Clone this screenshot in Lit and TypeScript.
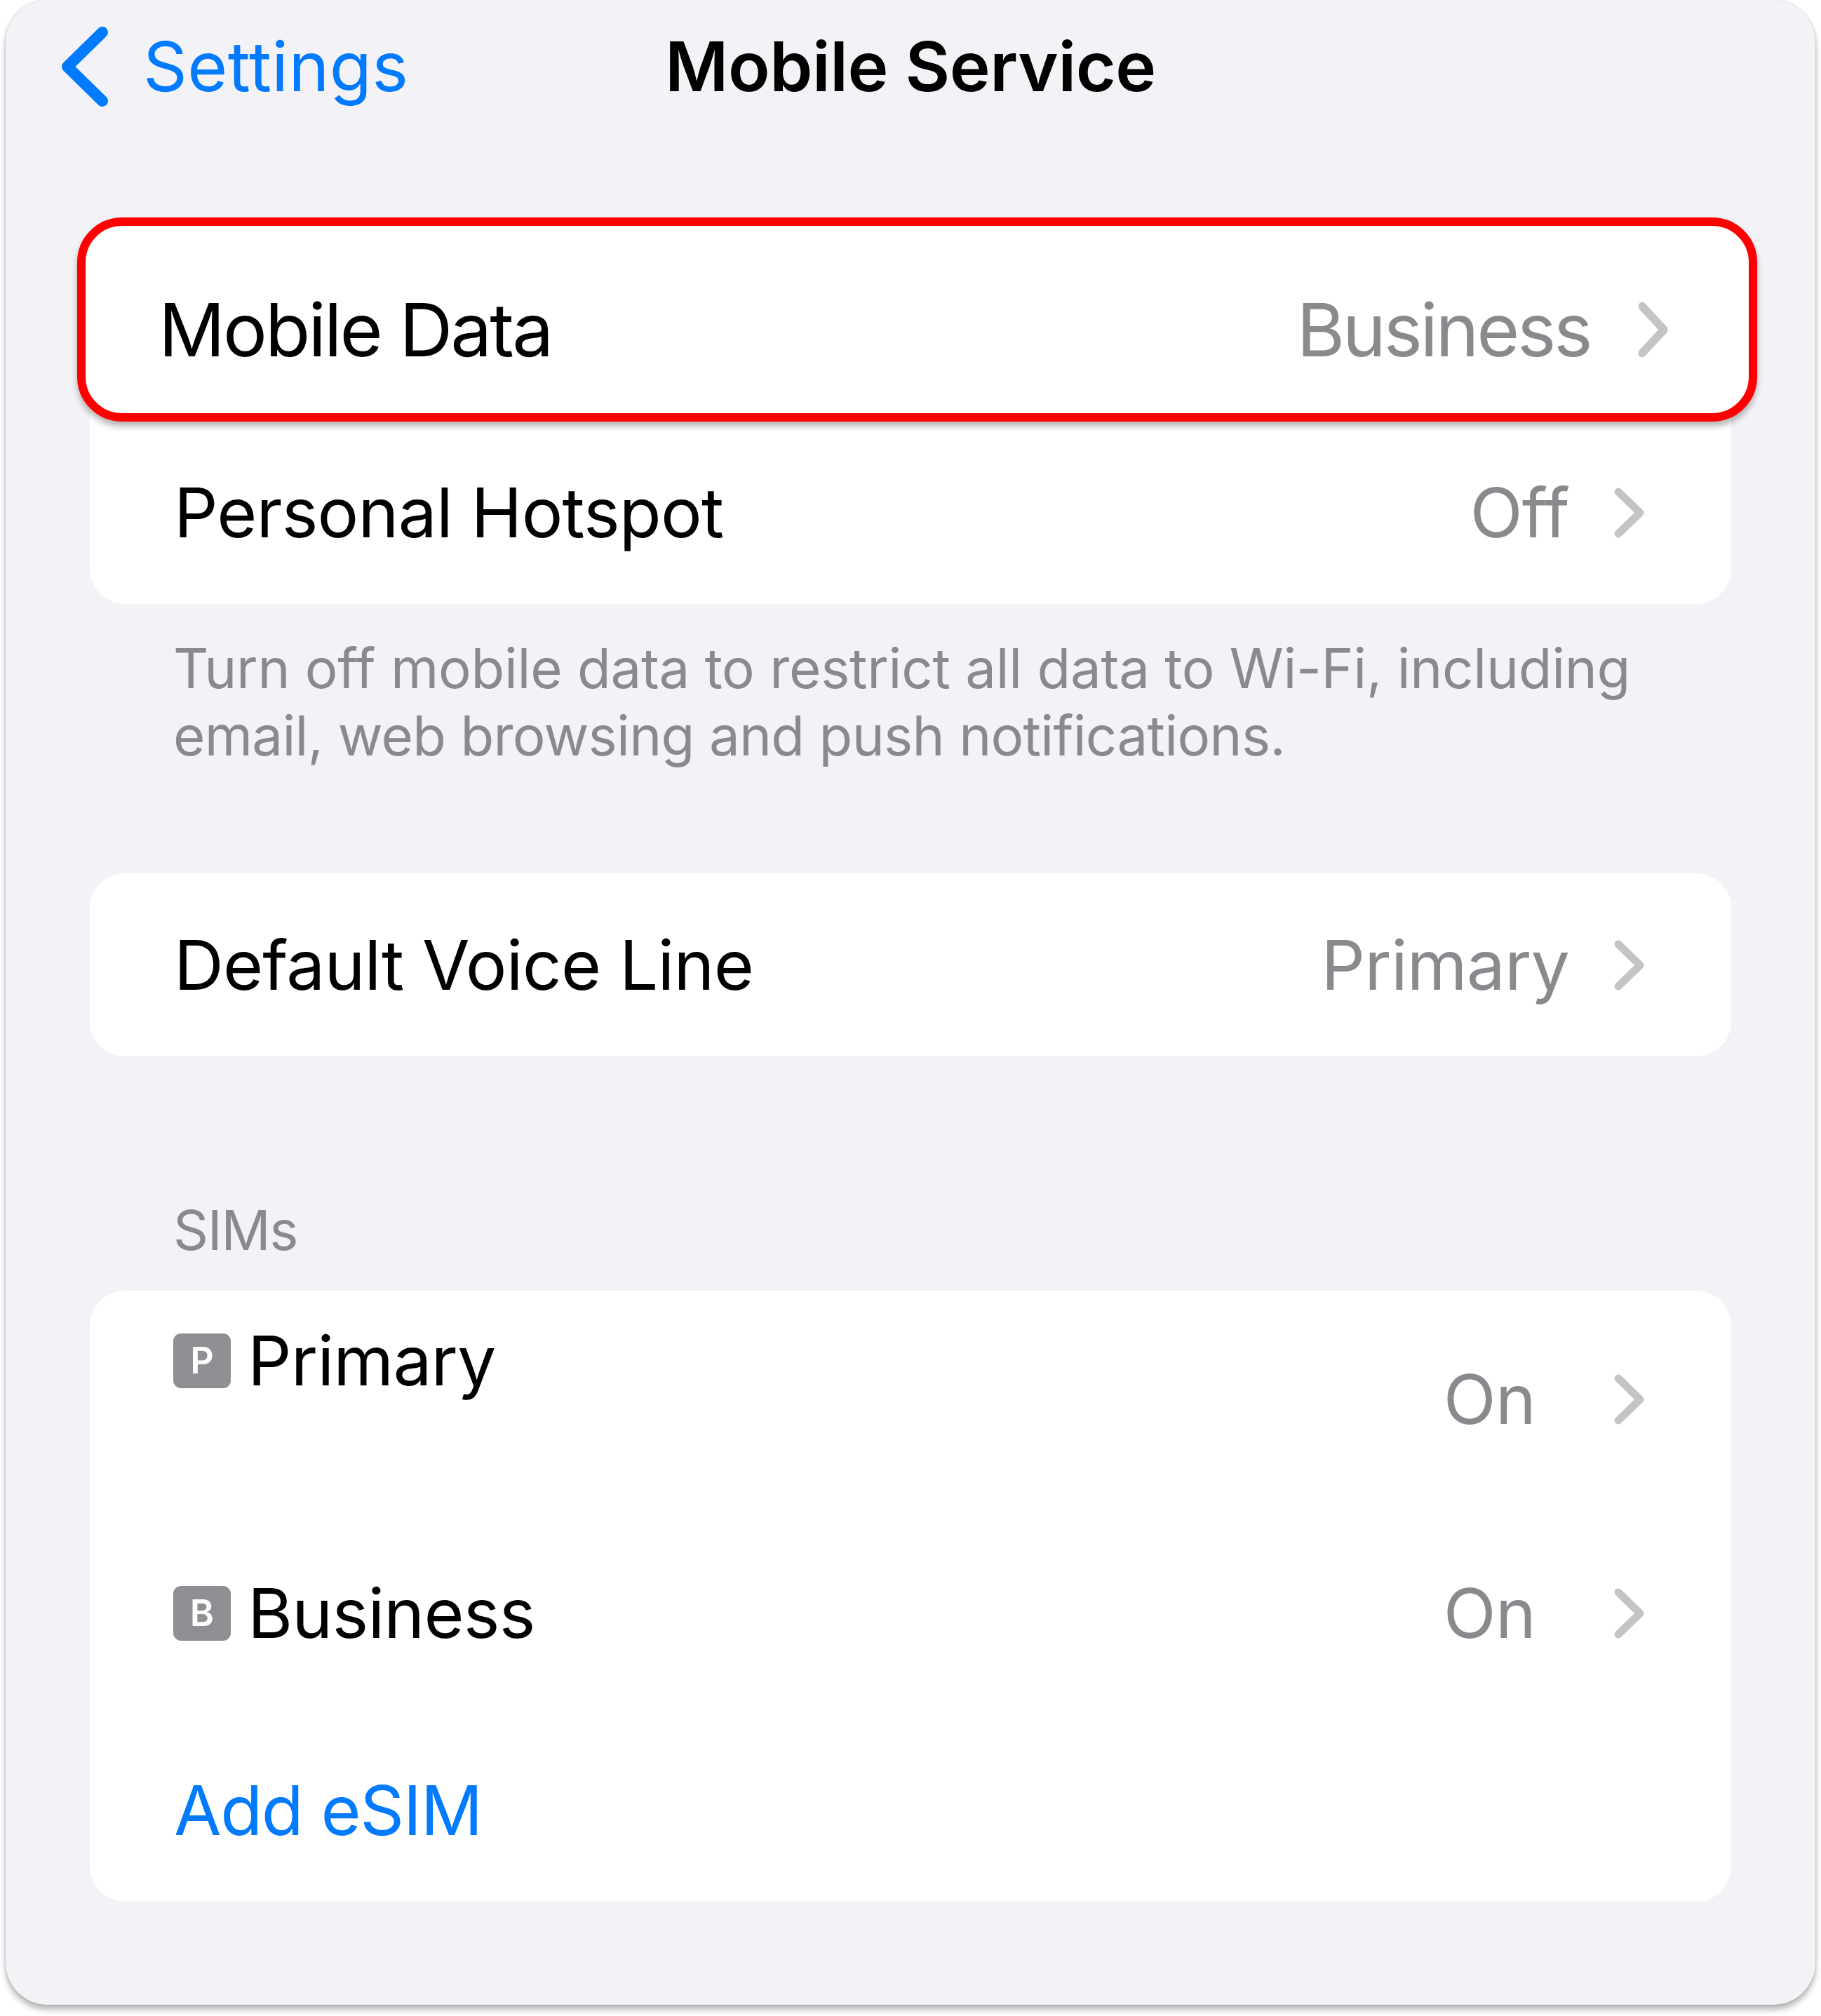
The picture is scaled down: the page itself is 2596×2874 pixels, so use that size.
import { LitElement, html, css, svg } from "lit";
import { customElement } from "lit/decorators.js";

const chevron = (big = false) => html`<svg class=${big ? "chev big" : "chev"} viewBox="0 0 44 72" preserveAspectRatio="none" fill="none" stroke="#c4c4c6" stroke-width="11" stroke-linecap="round" stroke-linejoin="round">${svg`<path d="M6 6 L37 36 L6 66"/>`}</svg>`;

@customElement("app-root")
export class AppRoot extends LitElement {
  static styles = css`
    :host { display: block; width: 2596px; height: 2874px; background: #fff; font-family: Inter, "Liberation Sans", sans-serif; color: #000; }
    .panel { box-sizing: border-box; width: 2580px; height: 2858px; margin: 0 8px; padding: 0 120px; background: #f2f2f7; border-radius: 60px; box-shadow: 0 7px 9px rgba(0,0,0,.28), 0 0 3px rgba(0,0,0,.2); overflow: visible; }
    .head { height: 190px; margin: 0 -120px; display: grid; grid-template-columns: 1fr auto 1fr; align-items: center; }
    .back { display: flex; align-items: center; gap: 50px; padding-left: 79px; color: #007aff; font-size: 98px; letter-spacing: .4px; line-height: 1; }
    .back svg { width: 67px; height: 114px; }
    .title { font-size: 98px; font-weight: 600; letter-spacing: -.4px; line-height: 1; }
    .card { position: relative; background: #fff; border-radius: 50px; }
    .c1 { margin-top: 149px; padding-top: 261px; }
    .c2 { margin-top: 148px; }
    .c3 { margin-top: 38px; }
    .row { box-sizing: border-box; display: flex; align-items: center; justify-content: space-between; height: 261px; padding: 0 123px 0 120px; font-size: 98px; letter-spacing: -.8px; line-height: 1; }
    .right { display: flex; align-items: center; gap: 64px; color: #8a8a8e; }
    .chev { width: 44px; height: 72px; flex: none; }
    .chev.big { height: 80px; }
    .hl { position: absolute; left: -18px; top: -29px; width: 2395px; height: 291px; padding: 28px 114px 0 104px; background: #fff; border: 12px solid #ff0000; border-radius: 64px; box-shadow: 0 7px 9px rgba(0,0,0,.28); font-size: 105px; letter-spacing: -2.9px; }
    .hl .right { gap: 68px; letter-spacing: -3.4px; }
    .note { margin: 44px 0 0; padding-left: 119px; font-size: 78px; line-height: 96px; letter-spacing: -.3px; color: #8a8a8e; }
    .tight { letter-spacing: -.72px; }
    .sect { margin-top: 200px; padding-left: 119px; font-size: 78px; line-height: 96px; letter-spacing: -1.4px; color: #8a8a8e; }
    .name { display: flex; align-items: center; gap: 24px; margin-left: -1px; }
    .badge { width: 82px; height: 78px; border-radius: 11px; background: #8e8e93; color: #fff; font-size: 52px; font-weight: 600; letter-spacing: 0; display: flex; align-items: center; justify-content: center; }
    .r1 { height: 310px; }
    .r1 .name { align-self: flex-start; margin-top: 51px; }
    .r2 { height: 300px; }
    .c3 .right { gap: 112px; }
    .r3 { color: #007aff; letter-spacing: -1.4px; }
  `;

  render() {
    return html`<div class="panel">
      <div class="head">
        <div class="back">
          <svg viewBox="0 0 67 114" fill="none" stroke="#007aff" stroke-width="16" stroke-linecap="round" stroke-linejoin="round">${svg`<path d="M59 8 L9 57 L59 106"/>`}</svg>
          <span>Settings</span>
        </div>
        <div class="title">Mobile Service</div>
        <div></div>
      </div>
      <div class="card c1">
        <div class="row hl"><span>Mobile Data</span><span class="right">Business ${chevron(true)}</span></div>
        <div class="row"><span>Personal Hotspot</span><span class="right">Off ${chevron()}</span></div>
      </div>
      <p class="note">Turn off mobile data to restrict all data to Wi-Fi, including<br><span class="tight">email, web browsing and push notifications.</span></p>
      <div class="card c2">
        <div class="row"><span>Default Voice Line</span><span class="right">Primary ${chevron()}</span></div>
      </div>
      <div class="sect">SIMs</div>
      <div class="card c3">
        <div class="row r1"><span class="name"><span class="badge">P</span>Primary</span><span class="right">On ${chevron()}</span></div>
        <div class="row r2"><span class="name"><span class="badge">B</span>Business</span><span class="right">On ${chevron()}</span></div>
        <div class="row r3"><span>Add eSIM</span></div>
      </div>
    </div>`;
  }
}
